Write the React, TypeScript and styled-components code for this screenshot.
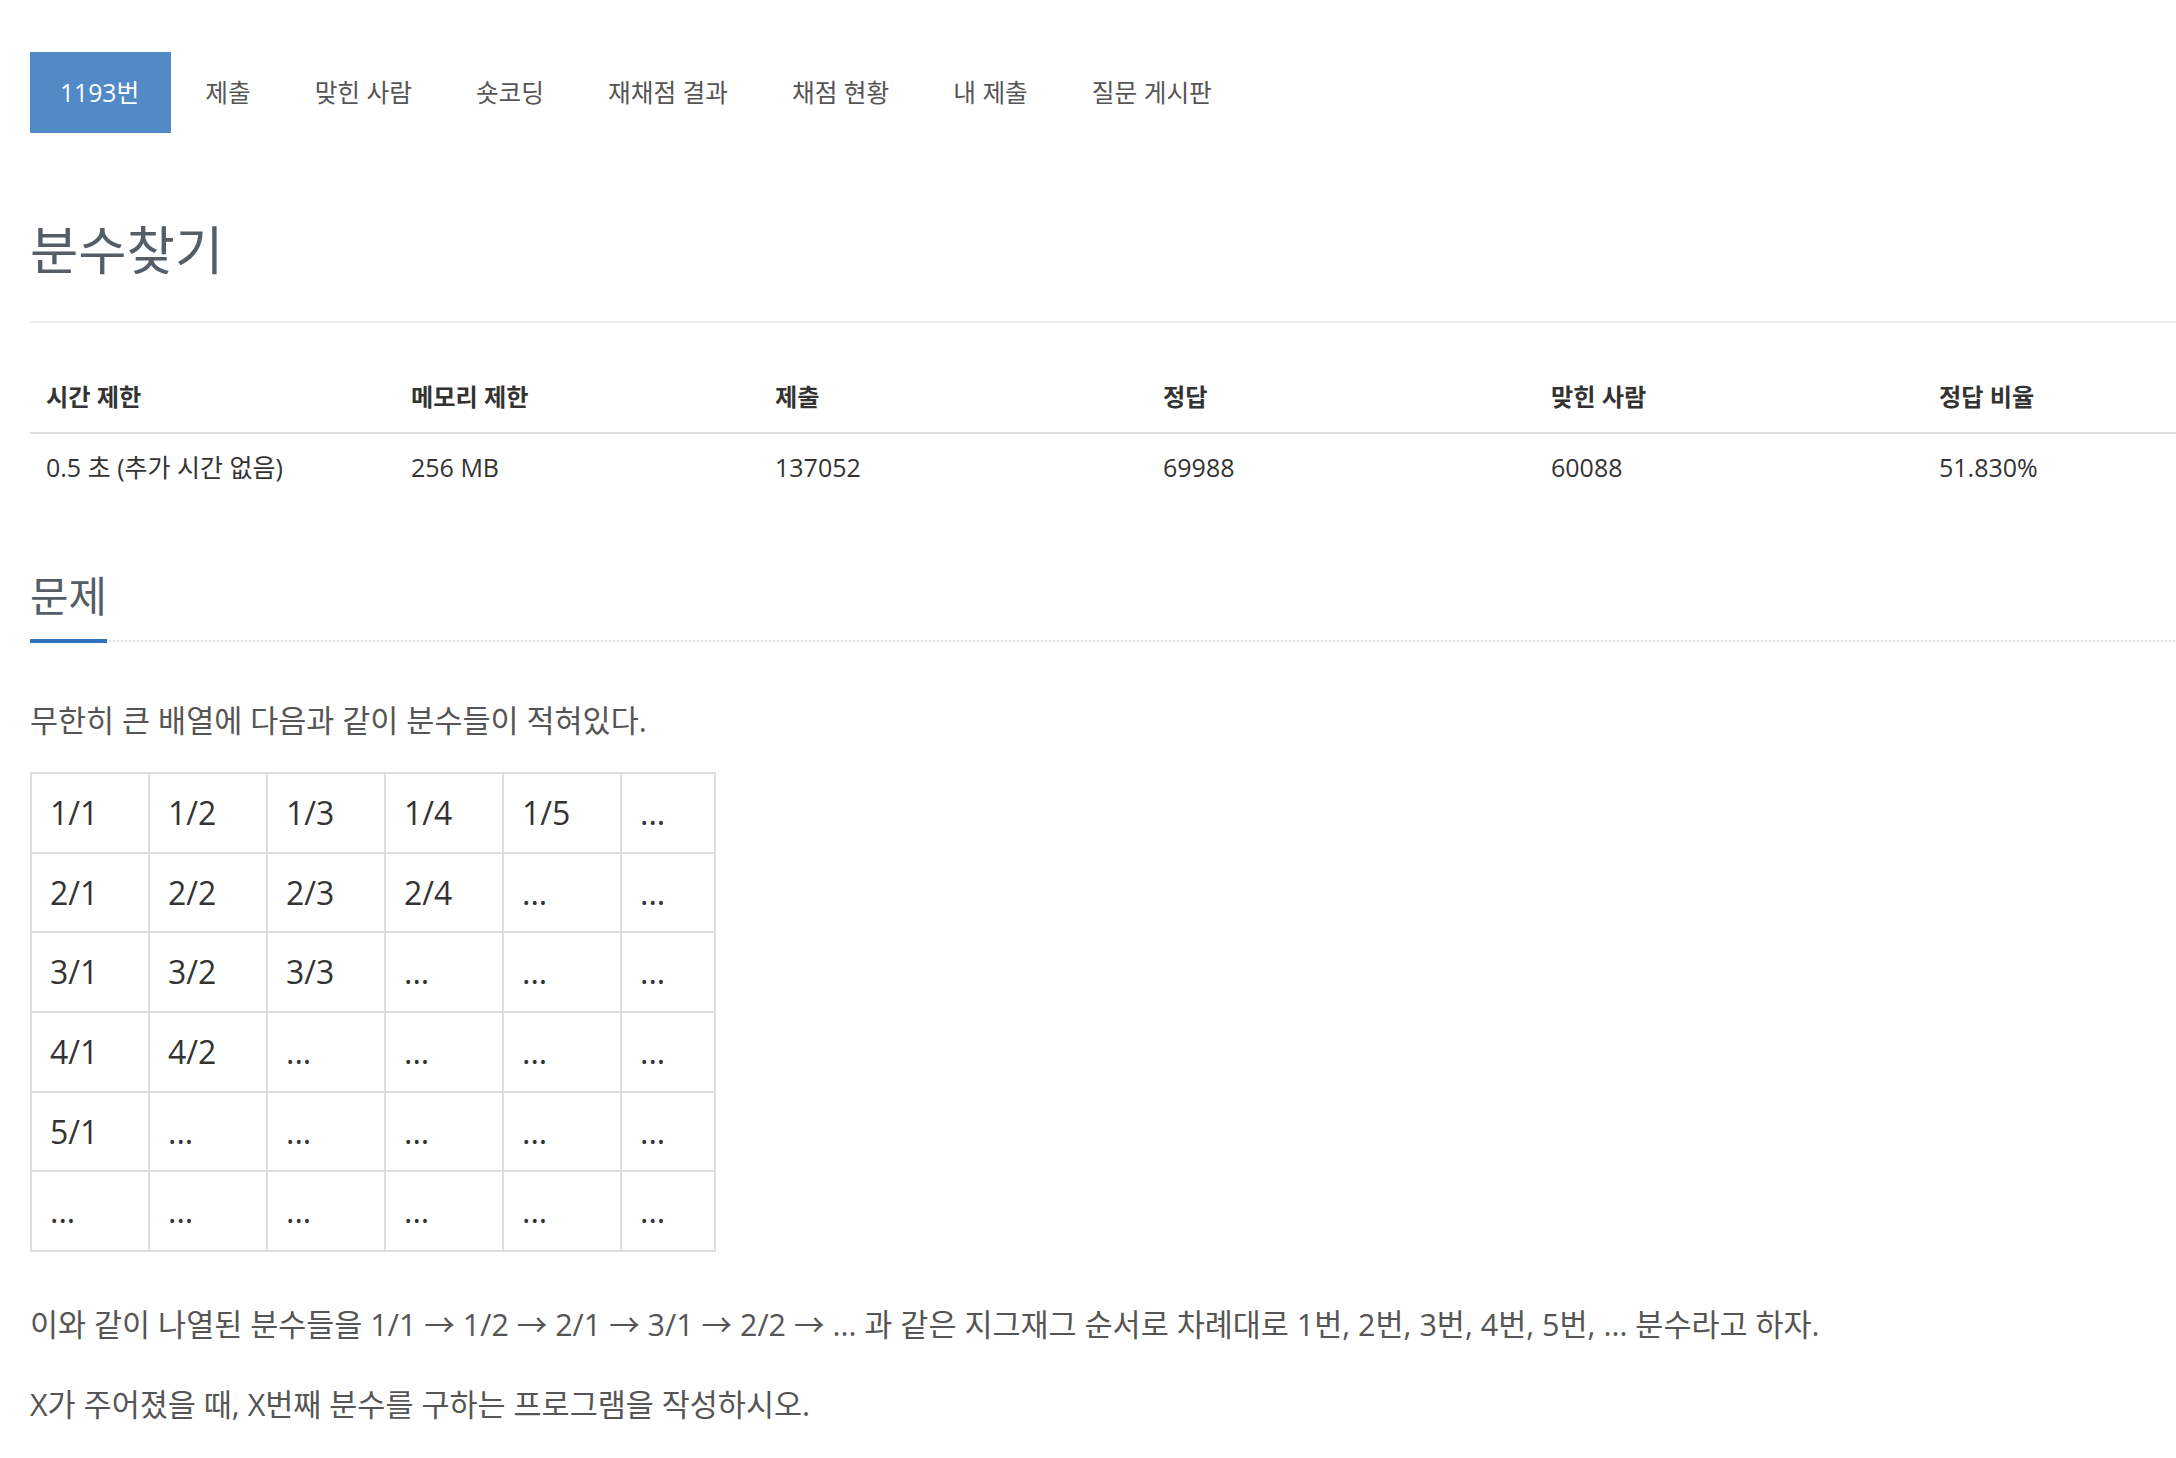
import React from "react";
import styled, { createGlobalStyle } from "styled-components";

const GlobalStyle = createGlobalStyle`
  html, body {
    margin: 0;
    padding: 0;
    background: #fff;
    overflow-x: hidden;
  }
  body {
    font-family: "Open Sans", "Noto Sans", "Noto Sans CJK KR", sans-serif;
    color: #333;
  }
`;

const Page = styled.div`
  width: 2280px;
  margin-left: 30px;
  padding: 52px 0 60px;
`;

const Tabs = styled.ul`
  display: flex;
  gap: 4px;
  list-style: none;
  margin: 0;
  padding: 0;
`;

const Tab = styled.li<{ $active?: boolean }>`
  padding: 24px 30px;
  font-size: 24.7px;
  line-height: 33px;
  white-space: nowrap;
  color: ${(p) => (p.$active ? "#fff" : "#555")};
  background: ${(p) => (p.$active ? "#5289c7" : "transparent")};
  &:first-child {
    padding: 24px 32px 24px 30px;
  }
`;

const PageHeader = styled.div`
  padding: 87px 0 41px;
  border-bottom: 2px solid #eee;
`;

const Title = styled.h1`
  margin: 0;
  font-size: 52.5px;
  line-height: 60px;
  font-weight: 400;
  color: #555d66;
`;

const InfoTable = styled.table`
  width: 2280px;
  margin-top: 41px;
  border-collapse: collapse;
  table-layout: fixed;
`;

const InfoHead = styled.th<{ $width?: number }>`
  width: ${(p) => (p.$width ? `${p.$width}px` : "auto")};
  padding: 16px 16px 18px;
  text-align: left;
  font-size: 24.2px;
  line-height: 34px;
  font-weight: 700;
  color: #333;
  border-bottom: 2px solid #ddd;
  white-space: nowrap;
`;

const InfoCell = styled.td`
  padding: 16px;
  font-size: 25px;
  line-height: 34px;
  color: #333;
  white-space: nowrap;
`;

const Headline = styled.div`
  display: flex;
  margin-top: 73px;
  border-bottom: 2px dotted #ddd;
`;

const SectionTitle = styled.h2`
  margin: 0 0 -3px;
  padding-bottom: 20px;
  font-size: 41.8px;
  line-height: 46px;
  font-weight: 400;
  color: #555d66;
  border-bottom: 4px solid #3673be;
`;

const Statement = styled.div`
  margin-top: 58px;
  font-size: 30.5px;
  line-height: 40px;
  color: #555;
`;

const Para = styled.p`
  margin: 0;
  & + & {
    margin-top: 40px;
  }
`;

const FracTable = styled.table`
  margin: 32px 0 52px;
  border-collapse: collapse;
`;

const FracCell = styled.td<{ $narrow?: boolean }>`
  width: ${(p) => (p.$narrow ? 56 : 80)}px;
  height: 77.7px;
  padding: 0 18px;
  border: 2px solid #ddd;
  font-size: 32px;
  color: #333;
  vertical-align: middle;
  white-space: nowrap;
`;

const tabs = ["1193번", "제출", "맞힌 사람", "숏코딩", "재채점 결과", "채점 현황", "내 제출", "질문 게시판"];

const info = [
  { head: "시간 제한", value: "0.5 초 (추가 시간 없음)", width: 333 },
  { head: "메모리 제한", value: "256 MB", width: 332 },
  { head: "제출", value: "137052", width: 356 },
  { head: "정답", value: "69988", width: 356 },
  { head: "맞힌 사람", value: "60088", width: 356 },
  { head: "정답 비율", value: "51.830%" },
];

const fractions = [
  ["1/1", "1/2", "1/3", "1/4", "1/5", "..."],
  ["2/1", "2/2", "2/3", "2/4", "...", "..."],
  ["3/1", "3/2", "3/3", "...", "...", "..."],
  ["4/1", "4/2", "...", "...", "...", "..."],
  ["5/1", "...", "...", "...", "...", "..."],
  ["...", "...", "...", "...", "...", "..."],
];

export default function App() {
  return (
    <>
      <GlobalStyle />
      <Page>
        <Tabs>
          {tabs.map((t, i) => (
            <Tab key={t} $active={i === 0}>
              {t}
            </Tab>
          ))}
        </Tabs>

        <PageHeader>
          <Title>분수찾기</Title>
        </PageHeader>

        <InfoTable>
          <thead>
            <tr>
              {info.map((c) => (
                <InfoHead key={c.head} $width={c.width}>
                  {c.head}
                </InfoHead>
              ))}
            </tr>
          </thead>
          <tbody>
            <tr>
              {info.map((c) => (
                <InfoCell key={c.head}>{c.value}</InfoCell>
              ))}
            </tr>
          </tbody>
        </InfoTable>

        <Headline>
          <SectionTitle>문제</SectionTitle>
        </Headline>

        <Statement>
          <Para>무한히 큰 배열에 다음과 같이 분수들이 적혀있다.</Para>
          <FracTable>
            <tbody>
              {fractions.map((row, r) => (
                <tr key={r}>
                  {row.map((f, c) => (
                    <FracCell key={c} $narrow={c === 5}>
                      {f}
                    </FracCell>
                  ))}
                </tr>
              ))}
            </tbody>
          </FracTable>
          <Para>
            이와 같이 나열된 분수들을 1/1 → 1/2 → 2/1 → 3/1 → 2/2 → ... 과 같은 지그재그 순서로 차례대로 1번, 2번, 3번,
            4번, 5번, ... 분수라고 하자.
          </Para>
          <Para>X가 주어졌을 때, X번째 분수를 구하는 프로그램을 작성하시오.</Para>
        </Statement>
      </Page>
    </>
  );
}
